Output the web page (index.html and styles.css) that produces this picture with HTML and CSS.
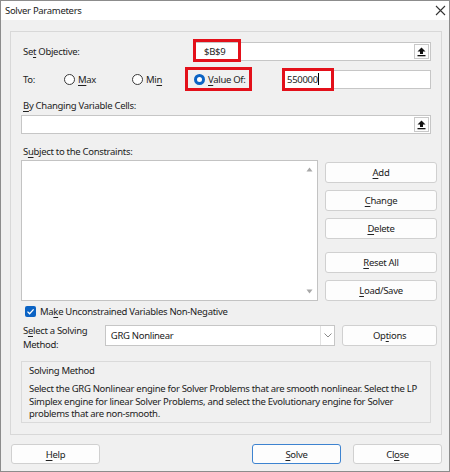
FILE: index.html
```html
<!DOCTYPE html>
<html lang="en">
<head>
    <meta charset="UTF-8">
    <title>Solver Parameters</title>
    <link rel="stylesheet" href="styles.css">
</head>
<body>
    <div class="window">
        <div class="titlebar">
            <span>Solver Parameters</span>
            <svg class="close-x" width="11" height="11" viewBox="0 0 11 11">
                <path d="M1 1 L10 10 M10 1 L1 10" stroke="#333" stroke-width="1.1" fill="none"/>
            </svg>
        </div>

        <div class="content">
            <div class="panel">
                <div class="row objective-row">
                    <span class="label">Se<u>t</u> Objective:</span>
                    <div class="field">
                        <span class="field-text">$B$9</span>
                        <span class="collapse-btn">
                            <svg width="9" height="10" viewBox="0 0 9 10"><path d="M4.5 0.5 L8.5 4.5 H6 V7 H3 V4.5 H0.5 Z" fill="#111"/><rect x="0.5" y="8" width="8" height="1.3" fill="#111"/></svg>
                        </span>
                        <span class="mark mark-objective"></span>
                    </div>
                </div>

                <div class="row to-row">
                    <span class="label">To:</span>
                    <span class="option opt-max"><span class="radio"></span><span><u>M</u>ax</span></span>
                    <span class="option opt-min"><span class="radio"></span><span>Mi<u>n</u></span></span>
                    <span class="option opt-value"><span class="radio checked"></span><span><u>V</u>alue Of:</span></span>
                    <div class="field value-field">
                        <span class="field-text">550000</span><span class="caret"></span>
                        <span class="mark mark-value"></span>
                    </div>
                </div>

                <div class="caption changing-caption"><u>B</u>y Changing Variable Cells:</div>
                <div class="field wide-field">
                    <span class="field-text"></span>
                    <span class="collapse-btn">
                        <svg width="9" height="10" viewBox="0 0 9 10"><path d="M4.5 0.5 L8.5 4.5 H6 V7 H3 V4.5 H0.5 Z" fill="#111"/><rect x="0.5" y="8" width="8" height="1.3" fill="#111"/></svg>
                    </span>
                </div>

                <div class="caption constraints-caption">S<u>u</u>bject to the Constraints:</div>
                <div class="constraints">
                    <div class="listbox">
                        <div class="scrollbar">
                            <svg width="7" height="5" viewBox="0 0 7 5"><path d="M3.5 0.5 L6.5 4.5 H0.5 Z" fill="#a8a8a8"/></svg>
                            <svg width="7" height="5" viewBox="0 0 7 5"><path d="M0.5 0.5 H6.5 L3.5 4.5 Z" fill="#a8a8a8"/></svg>
                        </div>
                    </div>
                    <div class="side-buttons">
                        <button class="btn"><u>A</u>dd</button>
                        <button class="btn"><u>C</u>hange</button>
                        <button class="btn"><u>D</u>elete</button>
                        <button class="btn spaced"><u>R</u>eset All</button>
                        <button class="btn"><u>L</u>oad/Save</button>
                    </div>
                </div>

                <div class="check-row">
                    <span class="checkbox">
                        <svg width="11" height="11" viewBox="0 0 11 11"><path d="M2.5 5.6 L4.6 7.7 L8.6 3.4" stroke="#fff" stroke-width="1.3" fill="none"/></svg>
                    </span>
                    <span>Ma<u>k</u>e Unconstrained Variables Non-Negative</span>
                </div>

                <div class="method-row">
                    <span class="method-label">S<u>e</u>lect a Solving<br>Method:</span>
                    <div class="select">
                        <span class="select-text">GRG Nonlinear</span>
                        <span class="select-arrow">
                            <svg width="8" height="5" viewBox="0 0 8 5"><path d="M0.5 0.5 L4 4 L7.5 0.5" stroke="#8a8a8a" stroke-width="1" fill="none"/></svg>
                        </span>
                    </div>
                    <button class="btn options-btn">Op<u>t</u>ions</button>
                </div>

                <div class="groupbox">
                    <div class="group-title">Solving Method</div>
                    <p>Select the GRG Nonlinear engine for Solver Problems that are smooth nonlinear. Select the LP Simplex engine for linear Solver Problems, and select the Evolutionary engine for Solver problems that are non-smooth.</p>
                </div>
            </div>

            <div class="footer">
                <button class="btn footer-btn"><u>H</u>elp</button>
                <div class="footer-right">
                    <button class="btn footer-btn default"><u>S</u>olve</button>
                    <button class="btn footer-btn">Cl<u>o</u>se</button>
                </div>
            </div>
        </div>
    </div>
</body>
</html>
```

FILE: styles.css
```css
body {
    margin: 0;
    background: #f0f0f0;
    font-family: "Noto Sans", "Open Sans", sans-serif;
    font-size: 9.5px;
    letter-spacing: -0.3px;
    color: #222;
}
u {
    text-decoration-thickness: 1px;
    text-underline-offset: 1.5px;
}
.window {
    width: 450px;
    height: 472px;
    box-sizing: border-box;
    border: 1px solid #8c8c8c;
    background: #f0f0f0;
}
.titlebar {
    height: 19px;
    background: #fff;
    display: flex;
    align-items: center;
    justify-content: space-between;
    padding: 0 3px 0 4px;
}
.close-x {
    display: block;
}
.content {
    padding: 11px 7px 0 9px;
}
.panel {
    border: 1px solid #d8d8d8;
    height: 404px;
    box-sizing: border-box;
    padding: 10px 4px 0 10px;
}

/* field rows */
.row {
    display: flex;
    align-items: center;
    margin-right: 6px;
}
.label {
    padding-left: 2px;
}
.objective-row .label {
    width: 172px;
}
.field {
    position: relative;
    flex: 1;
    height: 19px;
    box-sizing: border-box;
    background: #fff;
    border: 1px solid #c6c6c6;
    display: flex;
    align-items: center;
    padding-left: 8px;
}
.field-text {
    flex: 1;
}
.collapse-btn {
    width: 15px;
    height: 15px;
    box-sizing: border-box;
    border: 1px solid #c8c8c8;
    background: #fdfdfd;
    margin-right: 1px;
    display: flex;
    align-items: center;
    justify-content: center;
}
.mark {
    position: absolute;
    border: 3px solid #e3101a;
    box-sizing: border-box;
}
.mark-objective {
    left: -3px;
    top: -4px;
    width: 48px;
    height: 23px;
}
.mark-value {
    left: -2px;
    top: -3px;
    width: 52px;
    height: 23px;
}

.to-row {
    margin-top: 6px;
    height: 24px;
}
.to-row .label {
    width: 41px;
}
.option {
    display: flex;
    align-items: center;
    gap: 3px;
    white-space: nowrap;
}
.opt-max {
    width: 68px;
}
.opt-min {
    width: 53px;
}
.opt-value {
    height: 24px;
    box-sizing: border-box;
    width: 67px;
    border: 3px solid #e3101a;
    padding-left: 6px;
    margin-right: 31px;
}
.radio {
    width: 11px;
    height: 11px;
    box-sizing: border-box;
    border: 1px solid #3a3a3a;
    border-radius: 50%;
    background: #fff;
}
.radio.checked {
    border: 3px solid #0b63c4;
}
.value-field {
    padding-left: 3px;
}
.value-field .field-text {
    flex: none;
}
.caret {
    width: 1px;
    height: 12px;
    background: #000;
}

.caption {
    padding-left: 2px;
    line-height: 14px;
}
.changing-caption {
    margin-top: 8px;
}
.wide-field {
    margin-top: 2px;
    margin-right: 6px;
}
.constraints-caption {
    margin-top: 11px;
}

/* constraints list + buttons */
.constraints {
    margin-top: 1px;
    display: grid;
    grid-template-columns: 297px 112px;
    column-gap: 7px;
}
.listbox {
    height: 141px;
    box-sizing: border-box;
    background: #fff;
    border: 1px solid #c3c3c3;
    display: flex;
    justify-content: flex-end;
}
.scrollbar {
    width: 15px;
    display: flex;
    flex-direction: column;
    justify-content: space-between;
    align-items: center;
    padding: 6px 0 6px;
}
.scrollbar svg {
    display: block;
}
.side-buttons {
    padding-top: 2px;
    display: flex;
    flex-direction: column;
    gap: 7px;
}
.btn {
    font: inherit;
    letter-spacing: inherit;
    color: inherit;
    height: 21px;
    box-sizing: border-box;
    background: #fdfdfd;
    border: 1px solid #d0d0d0;
    border-radius: 3px;
    padding: 0;
}
.spaced {
    margin-top: 6px;
}

.check-row {
    margin-top: 3px;
    height: 14px;
    display: flex;
    align-items: center;
    gap: 4px;
    padding-left: 4px;
}
.checkbox {
    width: 11px;
    height: 11px;
    background: #0b63c4;
    border-radius: 2px;
    display: flex;
}

.method-row {
    margin-top: 6px;
    display: flex;
    align-items: flex-start;
}
.method-label {
    width: 82px;
    padding-left: 2px;
    line-height: 14px;
}
.select {
    margin-top: 1px;
    width: 231px;
    height: 21px;
    box-sizing: border-box;
    background: #fff;
    border: 1px solid #c6c6c6;
    display: flex;
    align-items: center;
    padding-left: 5px;
}
.select-text {
    flex: 1;
}
.select-arrow {
    width: 13px;
    height: 19px;
    border-left: 1px solid #e2e2e2;
    display: flex;
    align-items: center;
    justify-content: center;
}
.options-btn {
    margin-top: 1px;
    margin-left: 7px;
    width: 95px;
}

.groupbox {
    margin-top: 9px;
    margin-right: 6px;
    height: 62px;
    box-sizing: border-box;
    border: 1px solid #dadada;
    padding: 2px 7px 0;
}
.group-title {
    line-height: 14px;
}
.groupbox p {
    margin: 5px 0 0;
    line-height: 12.5px;
}

/* bottom buttons */
.footer {
    margin-top: 9px;
    display: flex;
    justify-content: space-between;
    padding-left: 1px;
}
.footer-right {
    display: flex;
    gap: 12px;
}
.footer-btn {
    width: 89px;
    height: 20px;
}
.default {
    border-color: #3d83d0;
}
```
